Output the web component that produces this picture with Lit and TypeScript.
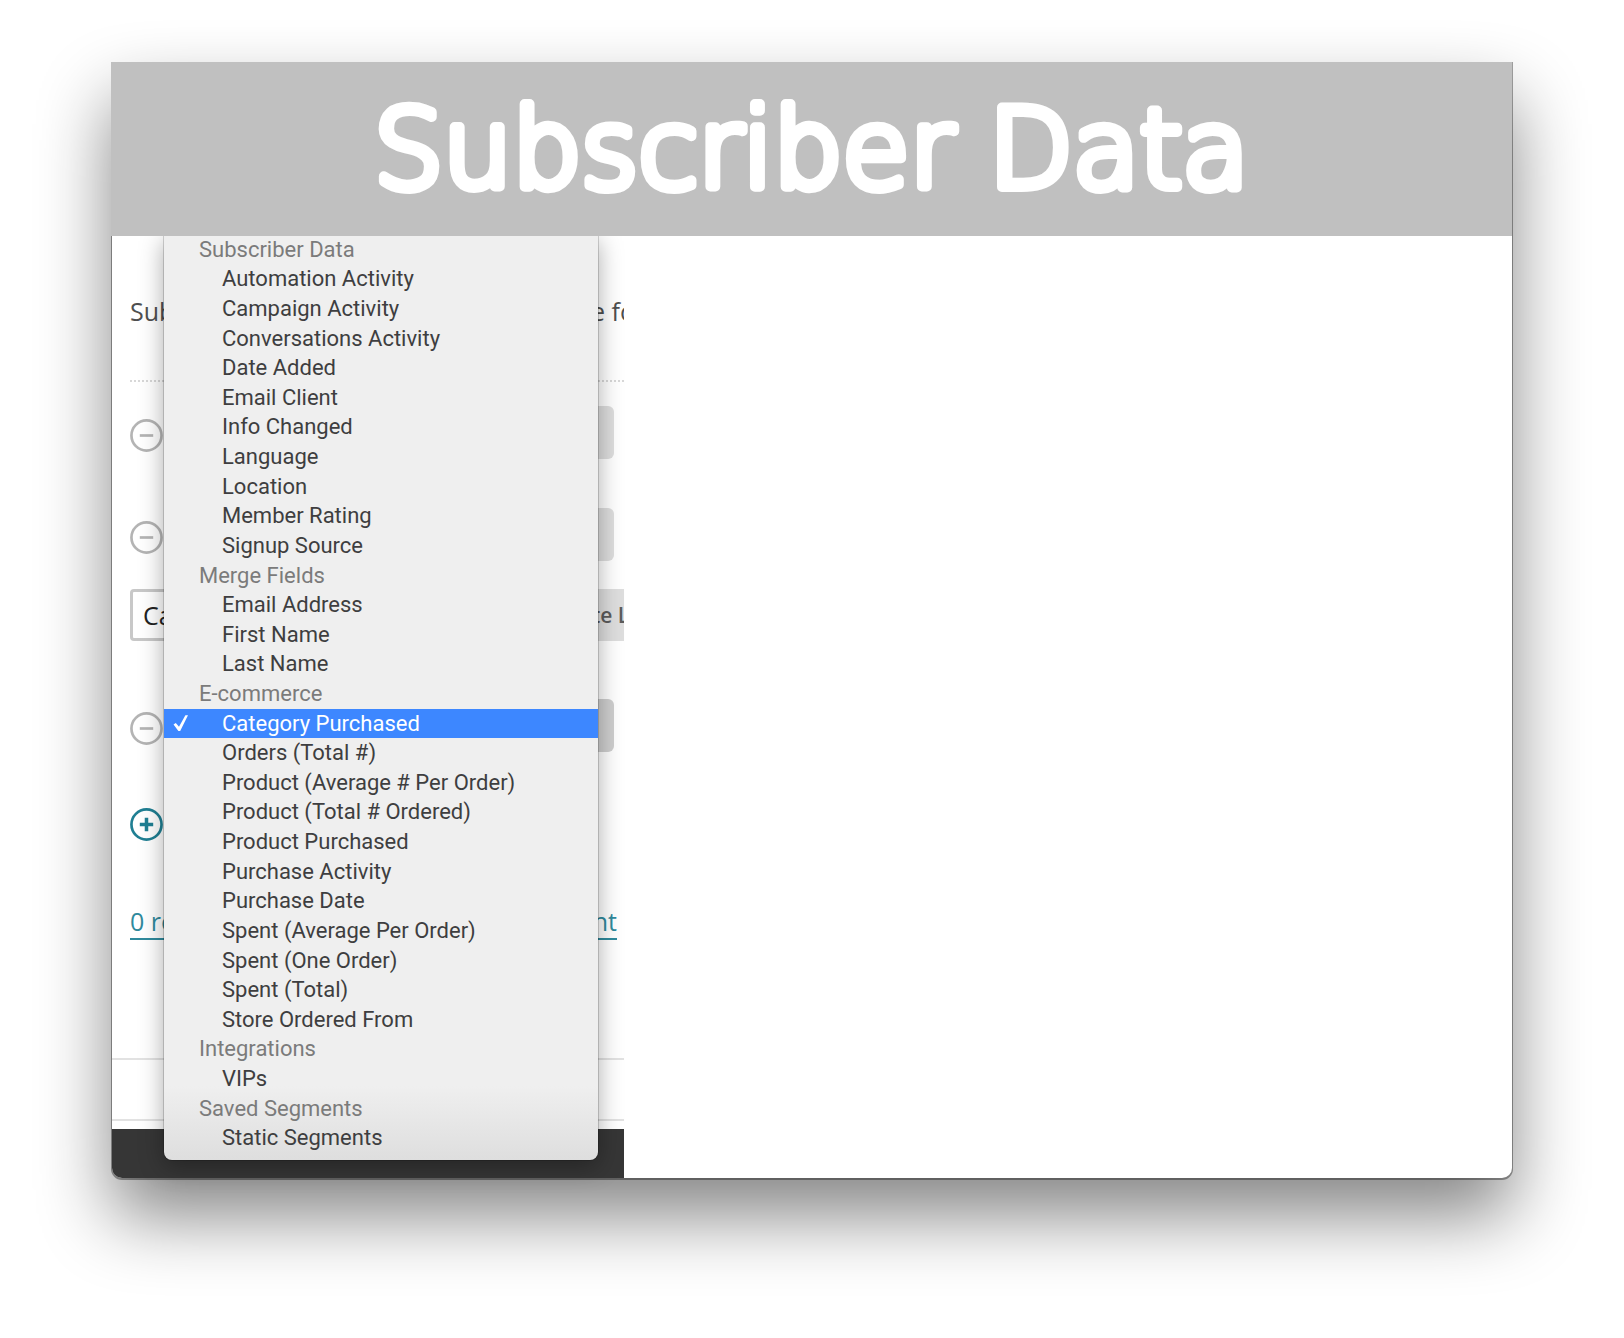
import { LitElement, html, css, svg } from "lit";
import { customElement, state } from "lit/decorators.js";
import { classMap } from "lit/directives/class-map.js";

interface Group {
  label: string;
  items: string[];
}

const GROUPS: Group[] = [
  {
    label: "Subscriber Data",
    items: [
      "Automation Activity",
      "Campaign Activity",
      "Conversations Activity",
      "Date Added",
      "Email Client",
      "Info Changed",
      "Language",
      "Location",
      "Member Rating",
      "Signup Source",
    ],
  },
  { label: "Merge Fields", items: ["Email Address", "First Name", "Last Name"] },
  {
    label: "E-commerce",
    items: [
      "Category Purchased",
      "Orders (Total #)",
      "Product (Average # Per Order)",
      "Product (Total # Ordered)",
      "Product Purchased",
      "Purchase Activity",
      "Purchase Date",
      "Spent (Average Per Order)",
      "Spent (One Order)",
      "Spent (Total)",
      "Store Ordered From",
    ],
  },
  { label: "Integrations", items: ["VIPs"] },
  { label: "Saved Segments", items: ["Static Segments"] },
];

/* Drop-down list of segment fields, grouped under plain headings. */
@customElement("field-menu")
export class FieldMenu extends LitElement {
  @state() private selected = "Category Purchased";

  static styles = css`
    :host {
      display: block;
    }
    .list {
      box-sizing: border-box;
      height: 100%;
      display: grid;
      grid-auto-rows: 1fr;
      padding-bottom: 7px;
      border-radius: 0 0 8px 8px;
      background: linear-gradient(#efefef, #efefef 92%, #dedede);
      box-shadow: 0 0 0 1px rgba(0, 0, 0, 0.16), 0 6px 24px rgba(0, 0, 0, 0.34);
      font: 450 22px Roboto, "Liberation Sans", sans-serif;
      color: #3e3e40;
    }
    .heading {
      display: flex;
      align-items: center;
      padding: 0 0 1px 35px;
      color: #7b7b7b;
    }
    .option {
      display: grid;
      grid-template-columns: 50px 1fr;
      align-items: center;
      padding: 0 0 1px 8px;
      border: 0;
      background: none;
      font: inherit;
      color: inherit;
      text-align: left;
      white-space: nowrap;
    }
    .chosen {
      background: #3d87ff;
      color: #fff;
    }
    .tick {
      display: block;
      width: 18px;
      height: 20px;
    }
  `;

  render() {
    return html`
      <div class="list" role="listbox" aria-label="Field">
        ${GROUPS.map(
          (g) => html`
            <div class="heading">${g.label}</div>
            ${g.items.map((item) => this.option(item))}
          `
        )}
      </div>
    `;
  }

  private option(item: string) {
    const on = item === this.selected;
    return html`<button
      class=${classMap({ option: true, chosen: on })}
      role="option"
      aria-selected=${on ? "true" : "false"}
      @click=${() => (this.selected = item)}
    >
      <span
        >${on
          ? html`<svg class="tick" viewBox="0 0 18 20" aria-hidden="true">
              <path d="M1.5 11.6 3.8 10 7 13.8 13.4 2.2 16 2.2 8.2 18 6.4 18Z" fill="#fff" />
            </svg>`
          : ""}</span
      ><span>${item}</span>
    </button>`;
  }
}

@customElement("app-root")
export class AppRoot extends LitElement {
  static styles = css`
    :host {
      display: block;
      background: #fff;
      font-family: "Open Sans", "Liberation Sans", sans-serif;
    }
    .page {
      padding: 62px 112px 160px;
    }
    .window {
      border-radius: 0 0 10px 10px;
      background: #fff;
      box-shadow: 0 1px 0 1px rgba(0, 0, 0, 0.36), 0 38px 72px rgba(0, 0, 0, 0.48);
    }
    .banner {
      position: relative;
      z-index: 2;
      height: 174px;
      margin: 0 0 0 -1px;
      background: #c0c0c0;
    }
    .title {
      display: block;
      width: 100%;
      height: 100%;
      font-family: "DejaVu Sans", sans-serif;
      font-size: 109px;
      font-weight: 200;
    }
    .title text {
      fill: #fff;
      stroke: #fff;
      stroke-width: 10px;
      stroke-linejoin: round;
      stroke-linecap: round;
      text-anchor: middle;
    }
    .body {
      position: relative;
      display: flex;
    }
    .pane {
      width: 512px;
      overflow: hidden;
      border-radius: 0 0 0 10px;
      font-size: 25px;
      line-height: 34px;
      color: #4f4f4f;
    }
    .form {
      display: flex;
      flex-direction: column;
      padding-left: 18px;
    }
    .split {
      display: grid;
      grid-template-columns: 1fr 33px;
      white-space: nowrap;
    }
    .intro {
      padding: 58px 0 52px;
      border-bottom: 2px dotted #d8d8d8;
    }
    .row {
      display: flex;
      align-items: center;
      justify-content: space-between;
      height: 53px;
      padding-right: 10px;
      margin-top: 24px;
    }
    .row.next {
      margin-top: 49px;
    }
    .row.last {
      margin-top: 58px;
    }
    .icon-button {
      display: block;
      padding: 0;
      margin-top: 6px;
      border: 0;
      background: none;
      width: 33px;
      height: 33px;
    }
    .icon {
      display: block;
      width: 33px;
      height: 33px;
      fill: none;
      stroke: #b4b4b4;
      stroke-width: 2.6;
    }
    .icon.add {
      stroke: #1f7f93;
    }
    .picker {
      width: 80px;
      height: 53px;
      border: 0;
      border-radius: 6px;
      background: #dedede;
    }
    .picker.active {
      background: #cfcfcf;
    }
    .value {
      display: grid;
      grid-template-columns: 1fr 80px;
      height: 52px;
      margin-top: 28px;
    }
    .text {
      box-sizing: border-box;
      width: 100%;
      min-width: 0;
      height: 52px;
      padding: 0 10px;
      border: 3px solid #c8c8c8;
      border-radius: 4px;
      background: #fff;
      font: 25px "Open Sans", sans-serif;
      color: #222;
    }
    .choose {
      border: 0;
      padding: 0 0 0 48px;
      background: #dedede;
      font: 600 21px "Open Sans", sans-serif;
      color: #5c5c5c;
      text-align: left;
      white-space: nowrap;
      overflow: hidden;
    }
    .add-row {
      margin-top: 50px;
    }
    .link {
      margin: 63px 7px 0 0;
      border-bottom: 2px solid #2f8a9d;
      color: #2f8a9d;
      text-decoration: none;
      display: flex;
      justify-content: space-between;
    }
    .strip {
      height: 59px;
      margin-top: 118px;
      border-top: 2px solid #e2e2e2;
      border-bottom: 2px solid #e2e2e2;
    }
    .footer {
      height: 49px;
      margin-top: 8px;
      background: #363636;
    }
    .menu {
      position: absolute;
      z-index: 1;
      left: 52px;
      top: -1px;
      bottom: 18px;
      width: 434px;
    }
  `;

  private minus() {
    return html`<button class="icon-button" aria-label="Remove condition">
      <svg class="icon" viewBox="0 0 32 32" aria-hidden="true">
        ${svg`<circle cx="16" cy="16" r="14.6" /><path d="M9.5 16h13" />`}
      </svg>
    </button>`;
  }

  render() {
    return html`
      <main class="page">
        <div class="window">
          <header class="banner">
            <svg class="title" role="heading" aria-level="1">
              <text x="50%" y="125">Subscriber Data</text>
            </svg>
          </header>
          <div class="body">
            <div class="pane">
              <div class="form">
                <div class="split intro"><span>Sub</span><span>e fo</span></div>
                <div class="row">
                  ${this.minus()}<button class="picker" aria-label="First condition"></button>
                </div>
                <div class="row next">
                  ${this.minus()}<button class="picker" aria-label="Second condition"></button>
                </div>
                <div class="value">
                  <input class="text" aria-label="Value" value="Ca" />
                  <button class="choose">te L</button>
                </div>
                <div class="row last">
                  ${this.minus()}<button class="picker active" aria-label="Third condition"></button>
                </div>
                <div class="add-row">
                  <button class="icon-button" aria-label="Add condition">
                    <svg class="icon add" viewBox="0 0 32 32" aria-hidden="true">
                      <circle cx="16" cy="16" r="14.6" />
                      <path d="M9.5 16h13M16 9.5v13" stroke-width="3.4" />
                    </svg>
                  </button>
                </div>
                <a class="link" href="#"><span>0 re</span><span>nt</span></a>
              </div>
              <div class="strip"></div>
              <div class="footer"></div>
            </div>
            <field-menu class="menu"></field-menu>
          </div>
        </div>
      </main>
    `;
  }
}
